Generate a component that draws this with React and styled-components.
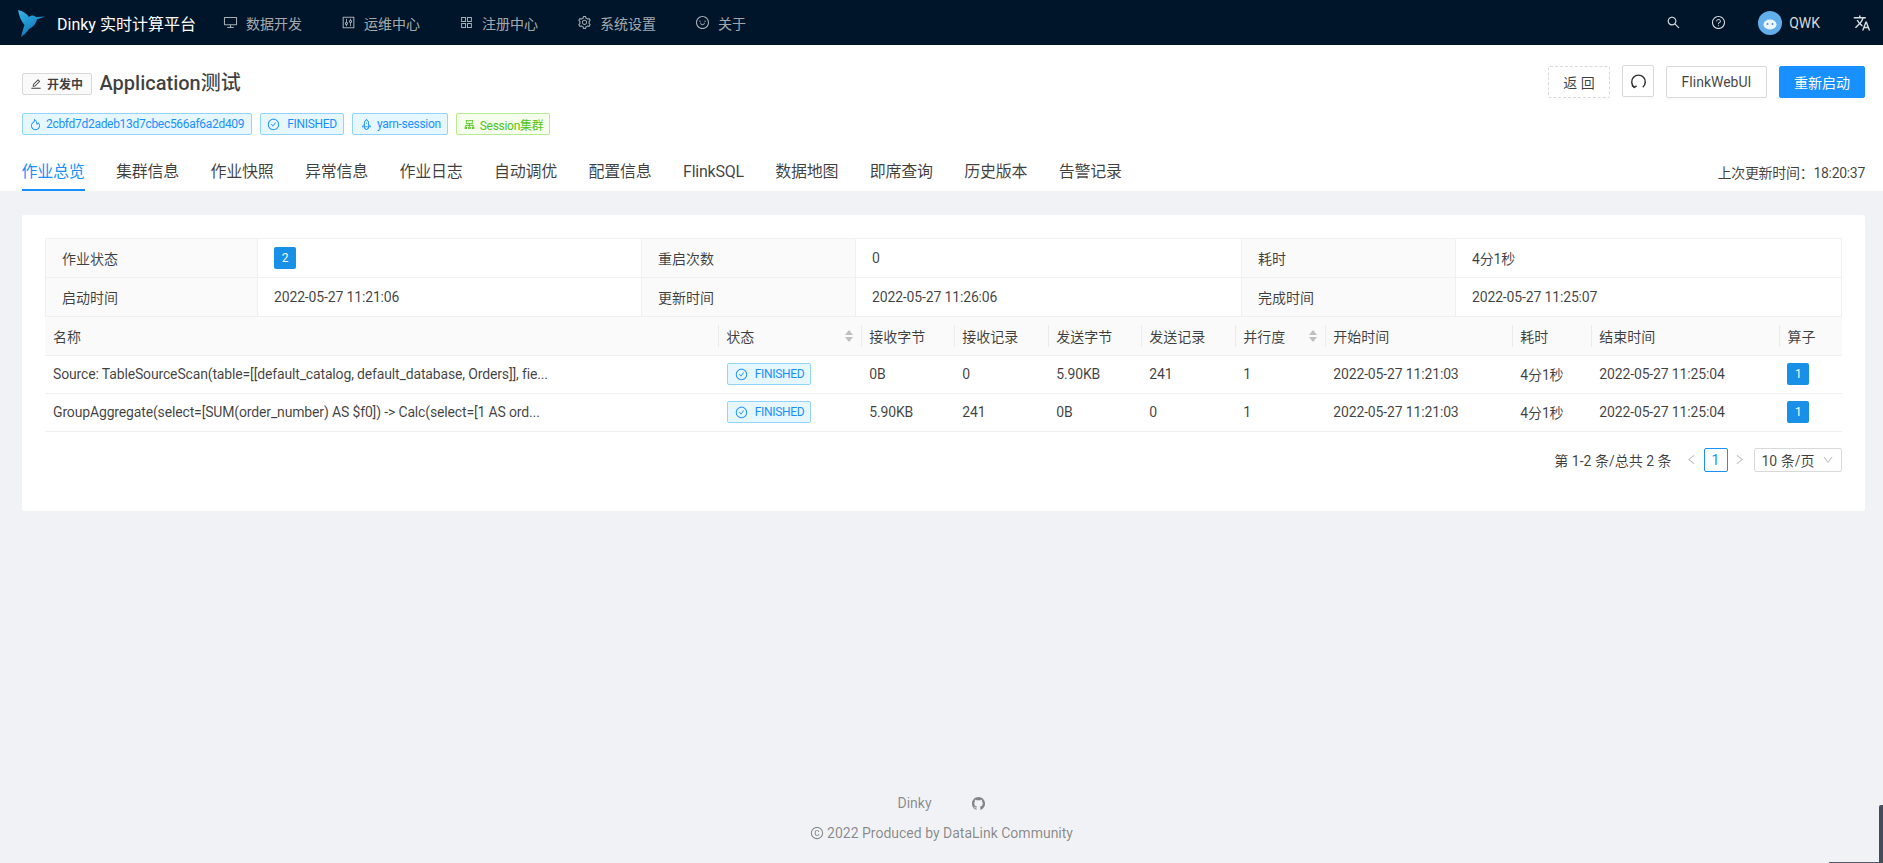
import React from "react";
import styled, { createGlobalStyle } from "styled-components";
import {
  AiOutlineDesktop,
  AiOutlineControl,
  AiOutlineAppstore,
  AiOutlineSetting,
  AiOutlineSmile,
  AiOutlineEdit,
  AiOutlineFire,
  AiOutlineCheckCircle,
  AiOutlineRocket,
  AiOutlineCluster,
  AiOutlineSearch,
  AiOutlineQuestionCircle,
  AiOutlineGithub,
  AiOutlineCopyright,
  AiOutlineLeft,
  AiOutlineRight,
  AiOutlineDown,
} from "react-icons/ai";
import { MdTranslate } from "react-icons/md";

const navItems = [
  { label: "数据开发", icon: <AiOutlineDesktop /> },
  { label: "运维中心", icon: <AiOutlineControl /> },
  { label: "注册中心", icon: <AiOutlineAppstore /> },
  { label: "系统设置", icon: <AiOutlineSetting /> },
  { label: "关于", icon: <AiOutlineSmile /> },
];

const tabs = ["作业总览", "集群信息", "作业快照", "异常信息", "作业日志", "自动调优", "配置信息", "FlinkSQL", "数据地图", "即席查询", "历史版本", "告警记录"];

const vertexColumns = [
  { title: "名称", width: 673 },
  { title: "状态", width: 143, sorter: true },
  { title: "接收字节", width: 93 },
  { title: "接收记录", width: 94 },
  { title: "发送字节", width: 93 },
  { title: "发送记录", width: 94 },
  { title: "并行度", width: 90, sorter: true },
  { title: "开始时间", width: 187 },
  { title: "耗时", width: 79 },
  { title: "结束时间", width: 188 },
  { title: "算子", width: 62 },
];

const vertices = [
  {
    name: "Source: TableSourceScan(table=[[default_catalog, default_database, Orders]], fie...",
    inBytes: "0B",
    inRecords: "0",
    outBytes: "5.90KB",
    outRecords: "241",
  },
  {
    name: "GroupAggregate(select=[SUM(order_number) AS $f0]) -> Calc(select=[1 AS ord...",
    inBytes: "5.90KB",
    inRecords: "241",
    outBytes: "0B",
    outRecords: "0",
  },
];

const DinkyLogo = () => (
  <svg width="28" height="28" viewBox="0 0 28 28">
    <defs>
      <linearGradient id="birdBody" x1="0" y1="0" x2="0.6" y2="1">
        <stop offset="0" stopColor="#35b6e8" />
        <stop offset="1" stopColor="#0f6fb8" />
      </linearGradient>
    </defs>
    <path d="M1 1 C6 2 10 5 12 8 C14 6 17 6 19 8 L28 7.5 L20 10.5 C19 15 16 18 12 20 C10 23 7 26 4 28 C5 24 6 20 7.5 16 C4 12 2 7 1 1 Z" fill="url(#birdBody)" />
  </svg>
);

const Avatar = () => (
  <svg width="24" height="24" viewBox="0 0 24 24">
    <circle cx="12" cy="12" r="12" fill="#62aeea" />
    <ellipse cx="12" cy="13.5" rx="6.5" ry="5" fill="#eaf5fd" />
    <circle cx="9.5" cy="13" r="1" fill="#4a90d9" />
    <circle cx="14.5" cy="13" r="1" fill="#4a90d9" />
  </svg>
);

const RefreshIcon = () => (
  <svg width="17" height="17" viewBox="0 0 16 16" fill="none" stroke="#333" strokeWidth="1.4">
    <path d="M4 13.4 A6.4 6.4 0 1 1 12 13.4" />
    <path d="M1.8 11.6 L4.1 13.6 L6.2 12.2" strokeLinejoin="round" />
  </svg>
);

const App = () => {
  return (
    <Page>
      <GlobalStyle />
      <TopBar>
        <LogoLink>
          <DinkyLogo />
          <BrandName>Dinky 实时计算平台</BrandName>
        </LogoLink>
        <Menu>
          {navItems.map((item) => (
            <MenuItem key={item.label}>
              {item.icon}
              {item.label}
            </MenuItem>
          ))}
        </Menu>
        <RightActions>
          <ActionIcon><AiOutlineSearch /></ActionIcon>
          <ActionIcon><AiOutlineQuestionCircle /></ActionIcon>
          <UserBox>
            <Avatar />
            QWK
          </UserBox>
          <LangIcon><MdTranslate /></LangIcon>
        </RightActions>
      </TopBar>

      <PageHead>
        <TitleRow>
          <TitleGroup>
            <StepTag><AiOutlineEdit />开发中</StepTag>
            <PageTitle>Application测试</PageTitle>
          </TitleGroup>
          <ButtonGroup>
            <DashedButton>返 回</DashedButton>
            <IconButton><RefreshIcon /></IconButton>
            <WebUiButton>FlinkWebUI</WebUiButton>
            <PrimaryButton>重新启动</PrimaryButton>
          </ButtonGroup>
        </TitleRow>
        <TagRow>
          <Tag><AiOutlineFire />2cbfd7d2adeb13d7cbec566af6a2d409</Tag>
          <CheckTag><AiOutlineCheckCircle />FINISHED</CheckTag>
          <Tag><AiOutlineRocket />yarn-session</Tag>
          <GreenTag><AiOutlineCluster />Session集群</GreenTag>
        </TagRow>
        <TabBar>
          <TabList>
            {tabs.map((tab, i) => (
              <Tab key={tab} $active={i === 0}>{tab}</Tab>
            ))}
          </TabList>
          <UpdateTime>上次更新时间：18:20:37</UpdateTime>
        </TabBar>
      </PageHead>

      <Card>
        <Descriptions>
          <colgroup>
            <col width="212" />
            <col width="384" />
            <col width="214" />
            <col width="386" />
            <col width="214" />
            <col width="386" />
          </colgroup>
          <tbody>
            <tr>
              <DescLabel>作业状态</DescLabel>
              <DescValue><CountBadge>2</CountBadge></DescValue>
              <DescLabel>重启次数</DescLabel>
              <DescValue>0</DescValue>
              <DescLabel>耗时</DescLabel>
              <DescValue>4分1秒</DescValue>
            </tr>
            <tr>
              <DescLabel>启动时间</DescLabel>
              <DescValue>2022-05-27 11:21:06</DescValue>
              <DescLabel>更新时间</DescLabel>
              <DescValue>2022-05-27 11:26:06</DescValue>
              <DescLabel>完成时间</DescLabel>
              <DescValue>2022-05-27 11:25:07</DescValue>
            </tr>
          </tbody>
        </Descriptions>

        <VertexTable>
          <colgroup>
            {vertexColumns.map((col) => (
              <col key={col.title} width={col.width} />
            ))}
          </colgroup>
          <thead>
            <tr>
              {vertexColumns.map((col) => (
                <HeadCell key={col.title}>
                  <HeadInner>
                    {col.title}
                    {col.sorter && <Sorter />}
                  </HeadInner>
                </HeadCell>
              ))}
            </tr>
          </thead>
          <tbody>
            {vertices.map((row) => (
              <tr key={row.name}>
                <BodyCell>{row.name}</BodyCell>
                <BodyCell><RowTag><AiOutlineCheckCircle />FINISHED</RowTag></BodyCell>
                <BodyCell>{row.inBytes}</BodyCell>
                <BodyCell>{row.inRecords}</BodyCell>
                <BodyCell>{row.outBytes}</BodyCell>
                <BodyCell>{row.outRecords}</BodyCell>
                <BodyCell>1</BodyCell>
                <BodyCell>2022-05-27 11:21:03</BodyCell>
                <BodyCell>4分1秒</BodyCell>
                <BodyCell>2022-05-27 11:25:04</BodyCell>
                <BodyCell><CountBadge>1</CountBadge></BodyCell>
              </tr>
            ))}
          </tbody>
        </VertexTable>

        <Pagination>
          <PageTotal>第 1-2 条/总共 2 条</PageTotal>
          <PageArrow><AiOutlineLeft /></PageArrow>
          <PageNumber>1</PageNumber>
          <PageArrow><AiOutlineRight /></PageArrow>
          <PageSize>10 条/页<AiOutlineDown /></PageSize>
        </Pagination>
      </Card>

      <Footer>
        <FooterLinks>
          <span>Dinky</span>
          <AiOutlineGithub />
        </FooterLinks>
        <Copyright><AiOutlineCopyright />2022 Produced by DataLink Community</Copyright>
      </Footer>
      <ScrollSliver />
    </Page>
  );
};

const fontStack = `"Roboto", "Noto Sans CJK SC", sans-serif`;

const GlobalStyle = createGlobalStyle`
  html, body {
    margin: 0;
    padding: 0;
    background: #f0f2f5;
    overflow: hidden;
  }
  * {
    box-sizing: border-box;
  }
`;

const Page = styled.div`
  min-height: 100vh;
  display: flex;
  flex-direction: column;
  font-family: ${fontStack};
  font-size: 14px;
  color: rgba(0, 0, 0, 0.75);
  background: #f0f2f5;
`;

const TopBar = styled.header`
  height: 45px;
  background: #001529;
  display: flex;
  align-items: center;
  padding-left: 17px;
  box-shadow: 0 1px 3px rgba(0, 21, 41, 0.2);
`;

const LogoLink = styled.div`
  width: 186px;
  display: flex;
  align-items: center;
  gap: 12px;
`;

const BrandName = styled.span`
  color: #fff;
  font-size: 16px;
  white-space: nowrap;
`;

const Menu = styled.nav`
  display: flex;
`;

const MenuItem = styled.div`
  width: 118px;
  padding-left: 20px;
  display: flex;
  align-items: center;
  gap: 8px;
  color: rgba(255, 255, 255, 0.65);
  white-space: nowrap;

  svg {
    font-size: 15px;
  }
`;

const RightActions = styled.div`
  margin-left: auto;
  display: flex;
  align-items: center;
  color: rgba(255, 255, 255, 0.85);
  padding-right: 12px;
`;

const ActionIcon = styled.span`
  width: 45px;
  display: flex;
  justify-content: center;
  font-size: 15px;
`;

const UserBox = styled.div`
  display: flex;
  align-items: center;
  gap: 7px;
  margin-left: 17px;
  font-size: 14px;
`;

const LangIcon = styled.span`
  display: flex;
  font-size: 18px;
  margin-left: 33px;
`;

const PageHead = styled.section`
  background: #fff;
  padding: 21px 18px 0 21.5px;
`;

const TitleRow = styled.div`
  height: 32px;
  display: flex;
  align-items: center;
  justify-content: space-between;
`;

const TitleGroup = styled.div`
  display: flex;
  align-items: center;
  gap: 8px;
  margin-top: 3px;
`;

const StepTag = styled.span`
  width: 70px;
  height: 22px;
  display: flex;
  align-items: center;
  justify-content: center;
  gap: 5px;
  font-size: 12px;
  font-weight: 600;
  background: #fafafa;
  border: 1px solid #d9d9d9;
  border-radius: 2px;
`;

const PageTitle = styled.h1`
  margin: -2px 0 0;
  font-size: 20px;
  font-weight: 500;
  line-height: 28px;
`;

const ButtonGroup = styled.div`
  display: flex;
  align-items: center;
  gap: 12px;
`;

const Button = styled.button`
  height: 32px;
  padding: 0;
  display: flex;
  align-items: center;
  justify-content: center;
  white-space: nowrap;
  font-family: ${fontStack};
  font-size: 14px;
  color: rgba(0, 0, 0, 0.75);
  background: #fff;
  border: 1px solid #d9d9d9;
  border-radius: 2px;
  box-shadow: 0 2px 0 rgba(0, 0, 0, 0.015);
`;

const DashedButton = styled(Button)`
  width: 62px;
  border-style: dashed;
`;

const IconButton = styled(Button)`
  width: 32px;
  margin-top: -2px;
`;

const WebUiButton = styled(Button)`
  width: 101px;
`;

const PrimaryButton = styled(Button)`
  width: 86px;
  color: #fff;
  background: #1890ff;
  border-color: #1890ff;
`;

const TagRow = styled.div`
  display: flex;
  gap: 8px;
  margin-top: 15px;
`;

const Tag = styled.span`
  height: 22px;
  padding: 0 6.5px;
  display: inline-flex;
  align-items: center;
  gap: 4px;
  font-size: 12px;
  letter-spacing: -0.3px;
  white-space: nowrap;
  color: #1890ff;
  background: #e6f7ff;
  border: 1px solid #91d5ff;
  border-radius: 2px;

  svg {
    flex-shrink: 0;
    font-size: 13px;
  }
`;

const CheckTag = styled(Tag)`
  gap: 7px;
`;

const GreenTag = styled(Tag)`
  padding: 0 5.5px;
  color: #52c41a;
  background: #f6ffed;
  border-color: #b7eb8f;
`;

const TabBar = styled.div`
  display: flex;
  align-items: center;
  justify-content: space-between;
  margin-top: 20px;
`;

const TabList = styled.div`
  display: flex;
  gap: 31.5px;
`;

const Tab = styled.div`
  padding: 6px 0;
  font-size: 16px;
  line-height: 22px;
  letter-spacing: -0.25px;
  white-space: nowrap;
  color: ${(p) => (p.$active ? "#1890ff" : "rgba(0, 0, 0, 0.75)")};
  border-bottom: 2px solid ${(p) => (p.$active ? "#1890ff" : "transparent")};
`;

const UpdateTime = styled.div`
  white-space: nowrap;
  margin-top: -2px;
  letter-spacing: -0.3px;
`;

const Card = styled.section`
  margin: 24px 18px 0 21.5px;
  padding: 23px 23.5px 39px 23.5px;
  background: #fff;
  border-radius: 2px;
`;

const Descriptions = styled.table`
  width: 100%;
  table-layout: fixed;
  border-collapse: collapse;
`;

const DescLabel = styled.td`
  height: 39px;
  padding: 0 16px;
  background: #fafafa;
  border: 1px solid #f0f0f0;
`;

const DescValue = styled.td`
  height: 39px;
  padding: 0 16px;
  letter-spacing: -0.15px;
  border: 1px solid #f0f0f0;
`;

const CountBadge = styled.span`
  width: 22px;
  height: 22px;
  display: flex;
  align-items: center;
  justify-content: center;
  font-size: 12px;
  color: #fff;
  background: #1890e8;
  border-radius: 2px;
`;

const VertexTable = styled.table`
  width: 100%;
  table-layout: fixed;
  border-collapse: collapse;
`;

const HeadCell = styled.th`
  position: relative;
  height: 38px;
  padding: 0 8px;
  font-weight: 400;
  text-align: left;
  background: #fafafa;
  border-bottom: 1px solid #f0f0f0;

  & + &::before {
    content: "";
    position: absolute;
    left: 0;
    top: 8px;
    bottom: 8px;
    width: 1px;
    background: rgba(0, 0, 0, 0.06);
  }
`;

const HeadInner = styled.div`
  display: flex;
  align-items: center;
  justify-content: space-between;
`;

const Sorter = styled.span`
  width: 8px;
  display: flex;
  flex-direction: column;
  gap: 2px;

  &::before,
  &::after {
    content: "";
    width: 0;
    height: 0;
    border-left: 4px solid transparent;
    border-right: 4px solid transparent;
  }

  &::before {
    border-bottom: 5px solid #bfbfbf;
  }

  &::after {
    border-top: 5px solid #bfbfbf;
  }
`;

const BodyCell = styled.td`
  height: 38px;
  padding: 0 8px;
  letter-spacing: -0.15px;
  white-space: nowrap;
  overflow: hidden;
  border-bottom: 1px solid #f0f0f0;
`;

const RowTag = styled(CheckTag)`
  width: 84px;
  margin-left: 1px;
`;

const Pagination = styled.div`
  display: flex;
  align-items: center;
  justify-content: flex-end;
  margin-top: 16px;
  height: 24px;
`;

const PageTotal = styled.span`
  margin-right: 8px;
  white-space: nowrap;
`;

const PageArrow = styled.span`
  width: 24px;
  display: flex;
  justify-content: center;
  font-size: 13px;
  color: rgba(0, 0, 0, 0.25);
`;

const PageNumber = styled.span`
  width: 24px;
  height: 24px;
  display: flex;
  align-items: center;
  justify-content: center;
  color: #1890ff;
  border: 1px solid #1890ff;
  border-radius: 2px;
`;

const PageSize = styled.span`
  width: 88px;
  height: 24px;
  margin-left: 2px;
  padding: 0 7px;
  display: flex;
  align-items: center;
  justify-content: space-between;
  white-space: nowrap;
  border: 1px solid #d9d9d9;
  border-radius: 2px;

  svg {
    font-size: 12px;
    color: rgba(0, 0, 0, 0.25);
  }
`;

const Footer = styled.footer`
  margin-top: auto;
  padding-bottom: 19px;
  display: flex;
  flex-direction: column;
  align-items: center;
  gap: 8px;
  color: rgba(0, 0, 0, 0.45);
`;

const FooterLinks = styled.div`
  display: flex;
  align-items: center;
  gap: 39px;
  line-height: 22px;

  svg {
    font-size: 15px;
  }
`;

const Copyright = styled.div`
  display: flex;
  align-items: center;
  gap: 3px;
  line-height: 22px;
`;

const ScrollSliver = styled.div`
  position: fixed;
  right: 0;
  bottom: 0;
  width: 4px;
  height: 58px;
  background: #444b5a;
  border-radius: 2px 0 0 0;

  &::before {
    content: "";
    position: absolute;
    right: 4px;
    bottom: 0;
    width: 50px;
    height: 1px;
    background: #555c68;
  }
`;

export default App;
